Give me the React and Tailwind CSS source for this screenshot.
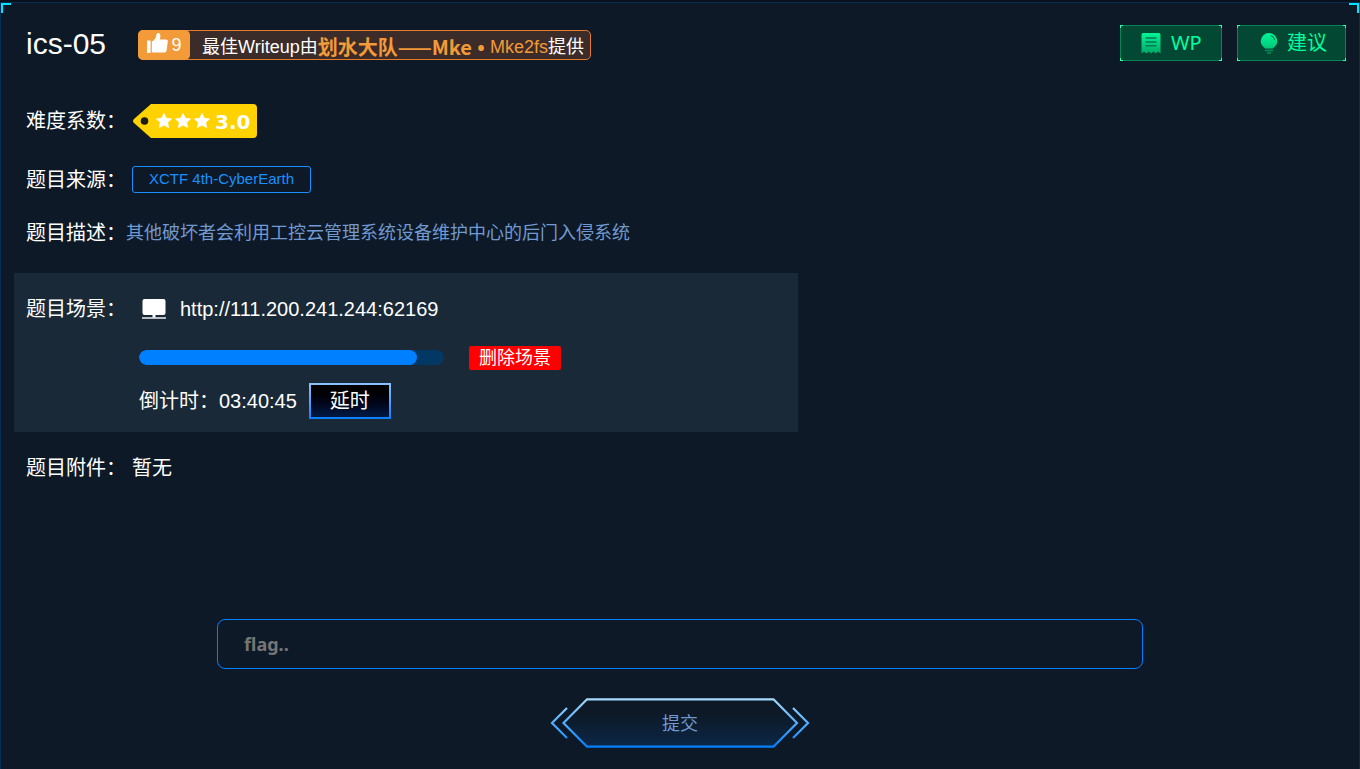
import { useState } from "react"

const difficulty = 3

const scene = {
    url: "http://111.200.241.244:62169",
    countdown: "03:40:45",
    progress: 91,
}

const Label = ({ children }) => (
    <span className="shrink-0 text-xl leading-7">{children}：</span>
)

const ThumbIcon = () => (
    <svg className="mb-1 h-5 w-[21px]" viewBox="0 0 21 20" fill="#fff" aria-hidden="true">
        <path d="M0 7.500h3.600V20H0z" />
        <path d="M4.800 8.500C7.400 7.300 8.800 5 9.300 2.400 9.600.6 10.200 0 11.200 0c1.500 0 2.300 1.500 2.200 3.200 0 1.200-.3 2.300-.7 3.300h6.200c1.300 0 2 .9 1.900 2.100l-1.200 9c-.2 1.300-1 2-2.100 2H8.200c-1.400 0-2.400-.3-3.400-.3z" />
    </svg>
)

const NoteIcon = () => (
    <svg className="h-[21px] w-5" viewBox="0 0 20 21" aria-hidden="true">
        <defs>
            <linearGradient id="note" x1="0" y1="0" x2="0" y2="1">
                <stop offset="0" stopColor="#00f596" />
                <stop offset="1" stopColor="#04a868" />
            </linearGradient>
        </defs>
        <path d="M2 0h16q1.500 0 1.500 2v18.500l-2.500-2-2.300 2-2.300-2-2.400 2-2.300-2-2.300 2-2.400-2-2.500 2V2Q.5 0 2 0z" fill="url(#note)" />
        <path d="M4.500 5h11M4.500 9h11M4.500 12.800h11" stroke="#027a50" strokeWidth="1.500" />
    </svg>
)

const BulbIcon = () => (
    <svg className="h-[21px] w-[18px]" viewBox="0 0 18 21" aria-hidden="true">
        <defs>
            <linearGradient id="bulb" x1="0" y1="0" x2="0" y2="1">
                <stop offset="0" stopColor="#00f596" />
                <stop offset="1" stopColor="#04c87a" />
            </linearGradient>
        </defs>
        <path d="M9 0a8.300 8.300 0 0 1 8.300 8.300c0 2.700-1.300 4.300-2.800 5.700-.7.600-1.300 1-1.600 1.400H5.100c-.3-.4-.9-.8-1.600-1.400C2 12.600.7 11 .7 8.300A8.300 8.300 0 0 1 9 0z" fill="url(#bulb)" />
        <path d="M10.500 2.800c2.200.5 3.700 2 4 4.200" stroke="#027a50" strokeWidth="1.100" fill="none" />
        <path d="M5 17.500h8M7 20h4" stroke="#04905c" strokeWidth="1.400" />
    </svg>
)

const MonitorIcon = () => (
    <svg className="h-5 w-6" viewBox="0 0 24 20" fill="#fff" aria-hidden="true">
        <rect x="0.500" y="0" width="23" height="16" rx="2" />
        <path d="M10.500 16h3v2.500h-3z" />
        <path d="M0 18.300h24v1.400H0z" />
    </svg>
)

const Star = ({ x }) => (
    <path
        transform={`translate(${x} 9)`}
        d="M7.500 0.500l2.300 4.700 5.200.7-3.800 3.500.9 5.100-4.600-2.400-4.600 2.400.9-5.100L0 5.900l5.200-.7z"
        fill="#fff"
        stroke="#fff"
        strokeWidth="0.800"
        strokeLinejoin="round"
    />
)

const DifficultyTag = () => (
    <svg className="ml-[7px] h-[34px] w-[125px]" viewBox="0 0 125 34" role="img" aria-label={`${difficulty}.0`}>
        <path d="M18 0h102a4 4 0 0 1 4 4v26a4 4 0 0 1-4 4H18L1 19q-2-2 0-4z" fill="#ffd200" />
        <circle cx="11.500" cy="17" r="3.800" fill="#1c1c16" />
        <Star x={23.500} />
        <Star x={42.500} />
        <Star x={61.500} />
        <text x="82" y="25" fill="#fff" fontSize="20" fontWeight="700" fontFamily="'DejaVu Sans', sans-serif">
            {difficulty}.0
        </text>
    </svg>
)

const GreenButton = ({ icon, className, children }) => (
    <button
        type="button"
        className={`relative flex h-9 items-center border border-[#088556] bg-[#024832] font-['Noto_Sans','Noto_Sans_CJK_SC',sans-serif] text-xl text-[#00ffa2] ${className}`}
    >
        <span className="absolute -left-px -top-px h-[3px] w-[3px] border-l border-t border-[#2effb0]" />
        <span className="absolute -right-px -top-px h-[3px] w-[3px] border-r border-t border-[#2effb0]" />
        <span className="absolute -bottom-px -left-px h-[3px] w-[3px] border-b border-l border-[#2effb0]" />
        <span className="absolute -bottom-px -right-px h-[3px] w-[3px] border-b border-r border-[#2effb0]" />
        {icon}
        {children}
    </button>
)

const SubmitShape = () => (
    <svg className="absolute inset-0 h-full w-full" viewBox="0 0 260 50" fill="none" aria-hidden="true">
        <defs>
            <linearGradient id="edge" gradientUnits="userSpaceOnUse" x1="0" y1="0" x2="0" y2="50">
                <stop offset="0" stopColor="#a9dcfb" />
                <stop offset="1" stopColor="#007fff" />
            </linearGradient>
            <linearGradient id="inside" x1="0" y1="0" x2="0" y2="1">
                <stop offset="0.300" stopColor="#0d1926" />
                <stop offset="1" stopColor="#0b2747" />
            </linearGradient>
        </defs>
        <path d="M37 1.300h186.500L247 25l-23.500 23.700H37L13.500 25z" fill="url(#inside)" stroke="url(#edge)" strokeWidth="2.200" />
        <path d="M17 10L2 25l15 15M243 10l15 15-15 15" stroke="url(#edge)" strokeWidth="2.200" />
    </svg>
)

const App = () => {
    const [flag, setFlag] = useState("")

    const handleSubmit = (e) => {
        e.preventDefault()
    }

    return (
        <div className="flex min-h-screen flex-col bg-[#0a111b] pt-[2px] font-['Liberation_Sans','Noto_Sans_CJK_SC',sans-serif] text-white">
            <main className="relative flex-1 border-x border-t border-[#052c54] bg-[#0d1926] px-[13px] pt-[22px]">
                <span className="absolute left-0 top-0 h-[10px] w-[10px] border-l-2 border-t-2 border-[#00e4ff]" />
                <span className="absolute right-0 top-0 h-[10px] w-[10px] border-r-2 border-t-2 border-[#00e4ff]" />

                <header className="flex h-10 items-center pl-3">
                    <h1 className="pb-[2px] text-3xl">ics-05</h1>
                    <div className="ml-8 flex h-[30px] items-center rounded-[5px] border border-[#e67b2c] bg-[#3b2b29] pr-[6px] text-lg">
                        <span className="-my-px -ml-px flex h-[30px] w-[52px] shrink-0 items-center justify-center gap-1 rounded-[5px] bg-[#f29b38]">
                            <ThumbIcon />
                            9
                        </span>
                        <span className="ml-3 flex items-center whitespace-pre pt-1 leading-6">
                            最佳Writeup由
                            <b className="font-['Noto_Sans_CJK_SC',sans-serif] text-xl leading-6 text-[#f29b38]">
                                划水大队——Mke
                                <span className="font-['Noto_Sans',sans-serif]"> • </span>
                            </b>
                            <span className="text-[#f29b38]">Mke2fs</span>
                            提供
                        </span>
                    </div>
                    <div className="ml-auto flex gap-[15px] self-start">
                        <GreenButton className="w-[102px] gap-[10px] pl-5" icon={<NoteIcon />}>WP</GreenButton>
                        <GreenButton className="w-[109px] gap-[9px] pl-[22px]" icon={<BulbIcon />}>建议</GreenButton>
                    </div>
                </header>

                <section className="mt-[39px] flex h-[34px] items-center pl-3">
                    <Label>难度系数</Label>
                    <DifficultyTag />
                </section>

                <section className="mt-7 flex h-[27px] items-center pl-3">
                    <Label>题目来源</Label>
                    <span className="ml-[6px] flex h-[27px] items-center rounded-[3px] border border-[#1890ff] px-4 text-[15px] text-[#1890ff]">
                        XCTF 4th-CyberEarth
                    </span>
                </section>

                <section className="mt-[26px] flex min-h-[27px] items-center pl-3">
                    <Label>题目描述</Label>
                    <p className="text-lg leading-[27px] text-[#7199d2]">
                        其他破坏者会利用工控云管理系统设备维护中心的后门入侵系统
                    </p>
                </section>

                <section className="mt-[26px] w-[784px] max-w-full bg-[#192938] px-3 pb-[13px] pt-[22px]">
                    <div className="flex h-7 items-center">
                        <Label>题目场景</Label>
                        <a href={scene.url} className="ml-4 flex items-center gap-[14px] text-xl leading-7">
                            <MonitorIcon />
                            {scene.url}
                        </a>
                    </div>
                    <div className="ml-[113px] mt-[23px] flex items-start">
                        <div className="mt-1 h-[15px] w-[305px] overflow-hidden rounded-full bg-[#043864]">
                            <div className="h-full rounded-full bg-[#007fff]" style={{ width: `${scene.progress}%` }} />
                        </div>
                        <button type="button" className="ml-[25px] h-6 rounded-[2px] bg-[#ff0000] px-[10px] text-lg leading-6">
                            删除场景
                        </button>
                    </div>
                    <div className="ml-[113px] mt-[13px] flex items-center text-xl">
                        <span>倒计时：{scene.countdown}</span>
                        <button
                            type="button"
                            className="ml-3 h-9 w-[82px] bg-linear-to-b from-[#8cc2ff] to-[#007fff] p-[2px]"
                        >
                            <span className="flex h-full items-center justify-center bg-linear-to-b from-black to-[#001a45]">延时</span>
                        </button>
                    </div>
                </section>

                <section className="mt-[22px] flex h-[27px] items-center pl-3">
                    <Label>题目附件</Label>
                    <span className="ml-[6px] text-xl leading-7">暂无</span>
                </section>

                <form onSubmit={handleSubmit} className="mt-[138px] flex flex-col items-center">
                    <input
                        type="text"
                        aria-label="flag"
                        placeholder="flag.."
                        value={flag}
                        onChange={(e) => setFlag(e.target.value)}
                        className="h-[50px] w-[926px] max-w-full rounded-lg border border-[#007fff] bg-transparent px-[26px] font-['Noto_Sans','Noto_Sans_CJK_SC',sans-serif] text-lg font-bold outline-none placeholder:text-[#757575]"
                    />
                    <button type="submit" className="relative mt-[29px] h-[50px] w-[260px] pt-[2px] text-lg text-[#7199d2]">
                        <SubmitShape />
                        <span className="relative">提交</span>
                    </button>
                </form>
            </main>
        </div>
    )
}

export default App
